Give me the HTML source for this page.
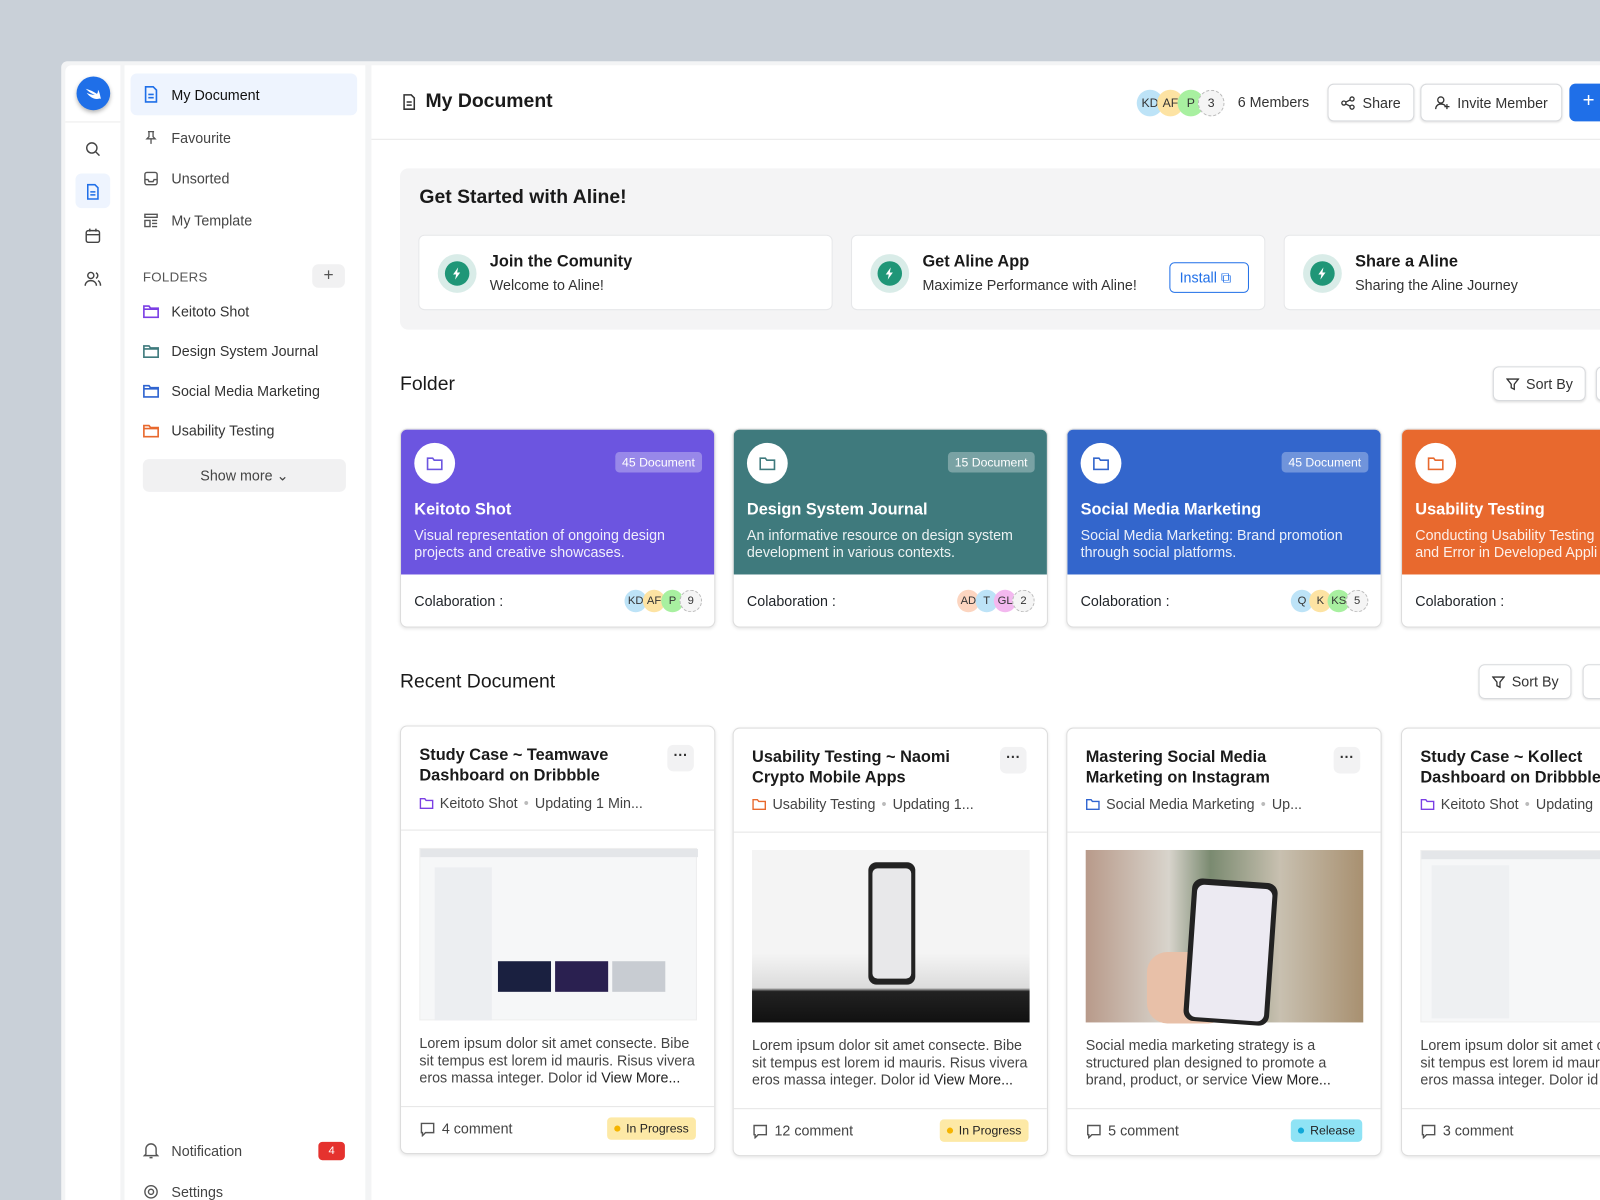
<!DOCTYPE html><html><head><meta charset="utf-8"><style>
*{box-sizing:border-box;margin:0;padding:0}
html,body{width:1600px;height:1200px;overflow:hidden;background:#c9d0d8}
body{font-family:"Liberation Sans",sans-serif;color:#1f2328;position:relative}
#w{position:absolute;left:0;top:0;width:1568px;height:1176px;transform:scale(1.0204);transform-origin:0 0}
.a{position:absolute}
.frame{left:60px;top:60px;width:1540px;height:1140px;background:#f3f4f5;border-radius:6px 0 0 0}
.rail{left:64px;top:64px;width:54px;height:1136px;background:#fff;border-radius:6px 0 0 0}
.side{left:122px;top:64px;width:236px;height:1136px;background:#fff}
.main{left:364px;top:64px;width:1236px;height:1136px;background:#fff}
.ni{position:absolute;left:140px;font-size:14px;color:#444;display:flex;align-items:center;gap:12px}
.fl{position:absolute;left:140px;font-size:14px;color:#333;display:flex;align-items:center;gap:12px}
.btn{position:absolute;border:1px solid #d8dadd;border-radius:6px;background:#fff;font-size:14px;color:#333;display:flex;align-items:center;justify-content:center;gap:7px;box-shadow:0 1px 2px rgba(0,0,0,.12)}
.av{display:inline-flex;width:24px;height:24px;border-radius:50%;align-items:center;justify-content:center;font-size:12px;color:#333;margin-left:-6px}
.gs{position:absolute;top:230px;height:74px;width:406px;background:#fff;border-radius:6px;border:1px solid #e6e7e9}
.gs .ic{position:absolute;left:18px;top:18px;width:38px;height:38px;border-radius:50%;background:#d9ece8;display:flex;align-items:center;justify-content:center}
.gs .ic i{width:24px;height:24px;border-radius:50%;background:#1f9677;display:flex;align-items:center;justify-content:center}
.gs b{position:absolute;left:69px;top:17px;font-size:16px;font-weight:600;color:#1a1a1a}
.gs span{position:absolute;left:69px;top:40px;font-size:14px;color:#333}
.fc{position:absolute;top:420px;width:309px;height:195px;border:1px solid #ddd;border-radius:7px;overflow:hidden;background:#fff;box-shadow:0 1px 3px rgba(0,0,0,.1)}
.fc .top{height:142px;color:#fff;position:relative}
.fc .ci{position:absolute;left:13px;top:13px;width:40px;height:40px;border-radius:50%;background:#fff;display:flex;align-items:center;justify-content:center}
.fc .bd{position:absolute;right:12px;top:22px;background:rgba(255,255,255,.3);font-size:12px;border-radius:4px;padding:3px 7px}
.fc h3{position:absolute;left:13px;top:70px;font-size:16px;font-weight:600}
.fc p{position:absolute;left:13px;top:95px;font-size:14px;line-height:17px;color:rgba(255,255,255,.9);white-space:nowrap}
.fc .bt{position:absolute;left:13px;top:160px;font-size:14px}
.fc .avs{position:absolute;right:12px;top:157px;display:flex}
.fc .avs .av{width:22px;height:22px;font-size:11px;margin-left:-4px}
.rc{position:absolute;top:711px;width:309px;height:420px;border:1px solid #ddd;border-radius:7px;background:#fff;overflow:hidden;box-shadow:0 1px 3px rgba(0,0,0,.1)}
.rc h3{position:absolute;left:18px;top:19px;font-size:16px;font-weight:600;line-height:20px;color:#1a1a1a}
.rc .meta{position:absolute;left:18px;top:66px;font-size:14px;color:#444;display:flex;align-items:center;gap:6px;white-space:nowrap}
.rc .dots{position:absolute;right:20px;top:18px;width:26px;height:26px;background:#f2f2f3;border-radius:6px;text-align:center;font-size:14px;line-height:20px;font-weight:bold;color:#333}
.rc .hr{position:absolute;left:0;right:0;top:101px;border-top:1px solid #e5e5e5}
.rc .img{position:absolute;left:18px;top:119px;width:272px;height:169px}
.rc .txt{position:absolute;left:18px;top:302px;font-size:14px;line-height:17px;color:#444;width:276px}
.rc .txt b{font-weight:normal;color:#222}
.rc .hr2{position:absolute;left:0;right:0;top:372px;border-top:1px solid #e5e5e5}
.rc .cm{position:absolute;left:18px;top:386px;font-size:14px;color:#444;display:flex;gap:6px;align-items:center}
.tag{position:absolute;right:18px;top:383px;font-size:12px;padding:4px 7px;border-radius:4px;color:#222;display:flex;align-items:center;gap:6px}
.tag i{width:6px;height:6px;border-radius:50%;display:block}
</style></head><body><div id="w">
<div class="a frame"></div>
<div class="a rail"></div>
<div class="a side"></div>
<div class="a main"></div>
<div class="a" style="left:64px;top:119px;width:54px;border-top:1px solid #ececec"></div>
<div class="a" style="left:75px;top:75px;width:33px;height:33px;border-radius:50%;background:#1f6fe8;box-shadow:0 2px 4px rgba(0,0,0,.3)">
<svg width="33" height="33" viewBox="0 0 33 33"><path d="M9 12c3 3 6 5 9 6-3 0-6-1-8-2 2 3 6 6 10 6 2 0 3-1 4 0-1-3-1-6-3-9 0 2 0 3-1 4-3-2-7-4-11-5z" fill="#fff"/></svg></div>
<svg class="a" style="left:83px;top:138px" width="16" height="16" viewBox="0 0 16 16" fill="none" stroke="#444" stroke-width="1.4"><circle cx="7" cy="7" r="5"/><path d="M11 11l3.5 3.5"/></svg>
<div class="a" style="left:74px;top:170px;width:34px;height:34px;border-radius:6px;background:#eef4fe"></div>
<svg class="a" style="left:84px;top:180px" width="14" height="16" viewBox="0 0 14 16" fill="none" stroke="#1f6fe8" stroke-width="1.5"><path d="M2 1h7l3 3v11H2z"/><path d="M4.5 8h5M4.5 11h5"/></svg>
<svg class="a" style="left:83px;top:223px" width="16" height="16" viewBox="0 0 16 16" fill="none" stroke="#444" stroke-width="1.4"><rect x="1.5" y="3" width="13" height="11.5" rx="2"/><path d="M1.5 7h13M5 1v3M11 1v3"/></svg>
<svg class="a" style="left:82px;top:265px" width="18" height="16" viewBox="0 0 18 16" fill="none" stroke="#444" stroke-width="1.4"><circle cx="7" cy="5" r="3"/><path d="M1.5 15c0-3 2.5-5 5.5-5s5.5 2 5.5 5M12 2.3a3 3 0 010 5.5M14 10c1.5.7 2.5 2.5 2.5 5"/></svg>
<div class="a" style="left:128px;top:72px;width:222px;height:41px;border-radius:6px;background:#eef4fe"></div>
<div class="ni" style="top:84px;color:#111"><svg width="16" height="17" viewBox="0 0 14 16" fill="none" stroke="#1f6fe8" stroke-width="1.5"><path d="M2 1h7l3 3v11H2z"/><path d="M4.5 8h5M4.5 11h5"/></svg>My Document</div>
<div class="ni" style="top:127px"><svg width="16" height="16" viewBox="0 0 16 16" fill="none" stroke="#555" stroke-width="1.3"><path d="M5 2h6M6 2v5l-2 2h8l-2-2V2M8 9v5"/></svg>Favourite</div>
<div class="ni" style="top:167px"><svg width="16" height="16" viewBox="0 0 16 16" fill="none" stroke="#555" stroke-width="1.4"><rect x="2" y="2" width="12" height="12" rx="2"/><path d="M2 9h3l1 2h4l1-2h3"/></svg>Unsorted</div>
<div class="ni" style="top:208px"><svg width="16" height="16" viewBox="0 0 16 16" fill="none" stroke="#555" stroke-width="1.4"><path d="M2 2h12v3H2zM2 8h5v6H2zM9 8h5M9 11h5M9 14h5"/></svg>My Template</div>
<div class="a" style="left:140px;top:264px;font-size:13px;color:#555;letter-spacing:.3px">FOLDERS</div>
<div class="a" style="left:306px;top:259px;width:32px;height:23px;border-radius:6px;background:#f1f1f2;text-align:center;line-height:22px;font-size:17px;color:#555">+</div>
<div class="fl" style="top:297px"><svg width="16" height="14" viewBox="0 0 16 14" fill="none" stroke="#7b3fe4" stroke-width="1.6"><path d="M1 2h5l1.5 2H15v9H1z"/><path d="M1 5h14"/></svg>Keitoto Shot</div>
<div class="fl" style="top:336px"><svg width="16" height="14" viewBox="0 0 16 14" fill="none" stroke="#3f7a7d" stroke-width="1.6"><path d="M1 2h5l1.5 2H15v9H1z"/><path d="M1 5h14"/></svg>Design System Journal</div>
<div class="fl" style="top:375px"><svg width="16" height="14" viewBox="0 0 16 14" fill="none" stroke="#2f64d0" stroke-width="1.6"><path d="M1 2h5l1.5 2H15v9H1z"/><path d="M1 5h14"/></svg>Social Media Marketing</div>
<div class="fl" style="top:414px"><svg width="16" height="14" viewBox="0 0 16 14" fill="none" stroke="#e8692e" stroke-width="1.6"><path d="M1 2h5l1.5 2H15v9H1z"/><path d="M1 5h14"/></svg>Usability Testing</div>
<div class="a" style="left:140px;top:450px;width:199px;height:32px;border-radius:6px;background:#f1f1f2;text-align:center;line-height:32px;font-size:14px;color:#444">Show more ⌄</div>
<div class="ni" style="top:1119px"><svg width="16" height="17" viewBox="0 0 16 17" fill="none" stroke="#555" stroke-width="1.4"><path d="M3 12V7a5 5 0 0110 0v5l1.5 1.5h-13zM6.5 15.5h3"/></svg>Notification</div>
<div class="a" style="left:312px;top:1119px;width:26px;height:18px;border-radius:4px;background:#e5322e;color:#fff;font-size:11px;text-align:center;line-height:18px">4</div>
<div class="ni" style="top:1160px"><svg width="16" height="16" viewBox="0 0 16 16" fill="none" stroke="#555" stroke-width="1.4"><circle cx="8" cy="8" r="2.5"/><circle cx="8" cy="8" r="6"/></svg>Settings</div>
<div class="a" style="left:364px;top:136px;width:1236px;border-top:1px solid #e8e8e8"></div>
<svg class="a" style="left:394px;top:92px" width="14" height="16" viewBox="0 0 14 16" fill="none" stroke="#333" stroke-width="1.5"><path d="M2 1h7l3 3v11H2z"/><path d="M4.5 8h5M4.5 11h5"/></svg>
<div class="a" style="left:417px;top:89px;font-size:19px;font-weight:600;color:#1a1a1a">My Document</div>
<div class="a" style="left:1120px;top:88px;display:flex">
<span class="av" style="background:#bde3f7;width:26px;height:26px">KD</span><span class="av" style="background:#fde3a3;width:26px;height:26px">AF</span><span class="av" style="background:#a8f0a0;width:26px;height:26px">P</span><span class="av" style="background:#f5f5f5;border:1px dashed #bbb;width:26px;height:26px">3</span></div>
<div class="a" style="left:1213px;top:92px;font-size:14px;color:#333">6 Members</div>
<div class="btn" style="left:1301px;top:82px;width:85px;height:37px"><svg width="14" height="14" viewBox="0 0 14 14" fill="none" stroke="#333" stroke-width="1.3"><circle cx="3" cy="7" r="2"/><circle cx="11" cy="3" r="2"/><circle cx="11" cy="11" r="2"/><path d="M5 6l4-2M5 8l4 2"/></svg>Share</div>
<div class="btn" style="left:1392px;top:82px;width:139px;height:37px"><svg width="15" height="14" viewBox="0 0 15 14" fill="none" stroke="#333" stroke-width="1.3"><circle cx="6" cy="4" r="3"/><path d="M1 13c0-3 2-5 5-5s4 1 4.5 2M12 8v5M9.5 10.5h5"/></svg>Invite Member</div>
<div class="a" style="left:1538px;top:82px;width:70px;height:37px;background:#1f6fe8;border-radius:6px;color:#fff;font-size:20px;padding-left:13px;line-height:35px">+</div>
<div class="a" style="left:392px;top:165px;width:1220px;height:158px;background:#f4f4f5;border-radius:8px"></div>
<div class="a" style="left:411px;top:183px;font-size:19px;font-weight:600;color:#1a1a1a">Get Started with Aline!</div>
<div class="gs" style="left:410px"><div class="ic"><i><svg width="10" height="12" viewBox="0 0 10 12"><path d="M6 0L1 7h3l-1 5 5-7H5z" fill="#fff"/></svg></i></div><b>Join the Comunity</b><span>Welcome to Aline!</span></div>
<div class="gs" style="left:834px"><div class="ic"><i><svg width="10" height="12" viewBox="0 0 10 12"><path d="M6 0L1 7h3l-1 5 5-7H5z" fill="#fff"/></svg></i></div><b>Get Aline App</b><span>Maximize Performance with Aline!</span>
<div style="position:absolute;left:311px;top:26px;width:78px;height:30px;border:1px solid #1f6fe8;border-radius:5px;color:#1f6fe8;font-size:14px;line-height:28px;padding-left:9px">Install ⧉</div></div>
<div class="gs" style="left:1258px"><div class="ic"><i><svg width="10" height="12" viewBox="0 0 10 12"><path d="M6 0L1 7h3l-1 5 5-7H5z" fill="#fff"/></svg></i></div><b>Share a Aline</b><span>Sharing the Aline Journey</span></div>
<div class="a" style="left:392px;top:366px;font-size:19px;color:#1a1a1a">Folder</div>
<div class="btn" style="left:1463px;top:359px;width:91px;height:34px"><svg width="13" height="13" viewBox="0 0 13 13" fill="none" stroke="#333" stroke-width="1.3"><path d="M1 1.5h11L8 6.5v5l-3-1.5V6.5z"/></svg>Sort By</div>
<div class="btn" style="left:1564px;top:359px;width:50px;height:34px"></div>
<div class="fc" style="left:392px"><div class="top" style="background:#6c55e0"><div class="ci"><svg width="16" height="14" viewBox="0 0 16 14" fill="none" stroke="#6c55e0" stroke-width="1.6"><path d="M1 2h5l1.5 2H15v9H1z"/></svg></div><div class="bd">45 Document</div><h3>Keitoto Shot</h3><p>Visual representation of ongoing design<br>projects and creative showcases.</p></div><div class="bt">Colaboration :</div><div class="avs"><span class="av" style="background:#bde3f7">KD</span><span class="av" style="background:#fde3a3">AF</span><span class="av" style="background:#a8f0a0">P</span><span class="av" style="background:#f5f5f5;border:1px dashed #bbb">9</span></div></div>
<div class="fc" style="left:718px"><div class="top" style="background:#3f7a7d"><div class="ci"><svg width="16" height="14" viewBox="0 0 16 14" fill="none" stroke="#3f7a7d" stroke-width="1.6"><path d="M1 2h5l1.5 2H15v9H1z"/></svg></div><div class="bd">15 Document</div><h3>Design System Journal</h3><p>An informative resource on design system<br>development in various contexts.</p></div><div class="bt">Colaboration :</div><div class="avs"><span class="av" style="background:#fcd5c0">AD</span><span class="av" style="background:#bde3f7">T</span><span class="av" style="background:#f3b8ef">GL</span><span class="av" style="background:#f5f5f5;border:1px dashed #bbb">2</span></div></div>
<div class="fc" style="left:1045px"><div class="top" style="background:#3366cc"><div class="ci"><svg width="16" height="14" viewBox="0 0 16 14" fill="none" stroke="#3366cc" stroke-width="1.6"><path d="M1 2h5l1.5 2H15v9H1z"/></svg></div><div class="bd">45 Document</div><h3>Social Media Marketing</h3><p>Social Media Marketing: Brand promotion<br>through social platforms.</p></div><div class="bt">Colaboration :</div><div class="avs"><span class="av" style="background:#bde3f7">Q</span><span class="av" style="background:#fde3a3">K</span><span class="av" style="background:#a8f0a0">KS</span><span class="av" style="background:#f5f5f5;border:1px dashed #bbb">5</span></div></div>
<div class="fc" style="left:1373px"><div class="top" style="background:#e8692e"><div class="ci"><svg width="16" height="14" viewBox="0 0 16 14" fill="none" stroke="#e8692e" stroke-width="1.6"><path d="M1 2h5l1.5 2H15v9H1z"/></svg></div><h3>Usability Testing</h3><p>Conducting Usability Testing<br>and Error in Developed Appli</p></div><div class="bt">Colaboration :</div></div>
<div class="a" style="left:392px;top:658px;font-size:19px;color:#1a1a1a">Recent Document</div>
<div class="btn" style="left:1449px;top:651px;width:91px;height:34px"><svg width="13" height="13" viewBox="0 0 13 13" fill="none" stroke="#333" stroke-width="1.3"><path d="M1 1.5h11L8 6.5v5l-3-1.5V6.5z"/></svg>Sort By</div>
<div class="btn" style="left:1551px;top:651px;width:50px;height:34px"></div>

<div class="rc" style="left:392px;top:711px"><h3>Study Case ~ Teamwave<br>Dashboard on Dribbble</h3><div class="dots">···</div><div class="meta" style="top:67px"><svg width="14" height="12" viewBox="0 0 16 14" fill="none" stroke="#7b3fe4" stroke-width="1.6"><path d="M1 2h5l1.5 2H15v9H1z"/></svg>Keitoto Shot <span style="color:#bbb">•</span> Updating 1 Min...</div><div class="hr"></div>
<div class="img" style="background:#f6f7f8;border:1px solid #eee"><div style="position:absolute;left:0;top:0;width:272px;height:8px;background:#e4e6e9"></div><div style="position:absolute;left:14px;top:18px;width:56px;height:150px;background:#eceef1"></div><div style="position:absolute;left:76px;top:110px;width:52px;height:30px;background:#1a2040"></div><div style="position:absolute;left:132px;top:110px;width:52px;height:30px;background:#2a2050"></div><div style="position:absolute;left:188px;top:110px;width:52px;height:30px;background:#c8ccd2"></div></div>
<div class="txt">Lorem ipsum dolor sit amet consecte. Bibe sit tempus est lorem id mauris. Risus vivera eros massa integer. Dolor id <b>View More...</b></div><div class="hr2"></div>
<div class="cm"><svg width="16" height="15" viewBox="0 0 16 15" fill="none" stroke="#555" stroke-width="1.4"><path d="M2 2h12v9H6l-3 3v-3H2z"/></svg>4 comment</div><div class="tag" style="background:#fde9a6"><i style="background:#f5b400"></i>In Progress</div></div>

<div class="rc" style="left:718px;top:713px"><h3>Usability Testing ~ Naomi<br>Crypto Mobile Apps</h3><div class="dots">···</div><div class="meta"><svg width="14" height="12" viewBox="0 0 16 14" fill="none" stroke="#e8692e" stroke-width="1.6"><path d="M1 2h5l1.5 2H15v9H1z"/></svg>Usability Testing <span style="color:#bbb">•</span> Updating 1...</div><div class="hr"></div>
<div class="img" style="background:linear-gradient(#f4f4f4 60%,#dcdcdc 80%,#222 82%,#111)"><div style="position:absolute;left:114px;top:12px;width:46px;height:120px;border-radius:8px;background:#222"></div><div style="position:absolute;left:118px;top:18px;width:38px;height:108px;border-radius:5px;background:#e8e8ea"></div></div>
<div class="txt">Lorem ipsum dolor sit amet consecte. Bibe sit tempus est lorem id mauris. Risus vivera eros massa integer. Dolor id <b>View More...</b></div><div class="hr2"></div>
<div class="cm"><svg width="16" height="15" viewBox="0 0 16 15" fill="none" stroke="#555" stroke-width="1.4"><path d="M2 2h12v9H6l-3 3v-3H2z"/></svg>12 comment</div><div class="tag" style="background:#fde9a6"><i style="background:#f5b400"></i>In Progress</div></div>

<div class="rc" style="left:1045px;top:713px"><h3>Mastering Social Media<br>Marketing on Instagram</h3><div class="dots">···</div><div class="meta"><svg width="14" height="12" viewBox="0 0 16 14" fill="none" stroke="#2f64d0" stroke-width="1.6"><path d="M1 2h5l1.5 2H15v9H1z"/></svg>Social Media Marketing <span style="color:#bbb">•</span> Up...</div><div class="hr"></div>
<div class="img" style="background:linear-gradient(90deg,#b89a8a,#d8d4cc 30%,#7a8a70 45%,#c8c0b0 70%,#a89070)"><div style="position:absolute;left:60px;top:100px;width:80px;height:70px;background:#e8c0a8;border-radius:20px"></div><div style="position:absolute;left:100px;top:30px;width:84px;height:140px;border-radius:10px;background:#222;transform:rotate(4deg)"></div><div style="position:absolute;left:105px;top:36px;width:74px;height:130px;border-radius:7px;background:#eceaf2;transform:rotate(4deg)"></div></div>
<div class="txt" style="width:250px">Social media marketing strategy is a structured plan designed to promote a brand, product, or service <b>View More...</b></div><div class="hr2"></div>
<div class="cm"><svg width="16" height="15" viewBox="0 0 16 15" fill="none" stroke="#555" stroke-width="1.4"><path d="M2 2h12v9H6l-3 3v-3H2z"/></svg>5 comment</div><div class="tag" style="background:#8fe3f5"><i style="background:#10a8d8"></i>Release</div></div>

<div class="rc" style="left:1373px;top:713px;width:260px"><h3>Study Case ~ Kollect<br>Dashboard on Dribbble</h3><div class="meta"><svg width="14" height="12" viewBox="0 0 16 14" fill="none" stroke="#7b3fe4" stroke-width="1.6"><path d="M1 2h5l1.5 2H15v9H1z"/></svg>Keitoto Shot <span style="color:#bbb">•</span> Updating</div><div class="hr"></div>
<div class="img" style="background:#f6f7f8;border:1px solid #eee;width:240px"><div style="position:absolute;left:0;top:0;width:240px;height:8px;background:#e4e6e9"></div><div style="position:absolute;left:10px;top:14px;width:76px;height:150px;background:#eef0f2"></div></div>
<div class="txt" style="white-space:nowrap">Lorem ipsum dolor sit amet c<br>sit tempus est lorem id maur<br>eros massa integer. Dolor id</div><div class="hr2"></div>
<div class="cm"><svg width="16" height="15" viewBox="0 0 16 15" fill="none" stroke="#555" stroke-width="1.4"><path d="M2 2h12v9H6l-3 3v-3H2z"/></svg>3 comment</div></div>
</div></body></html>
